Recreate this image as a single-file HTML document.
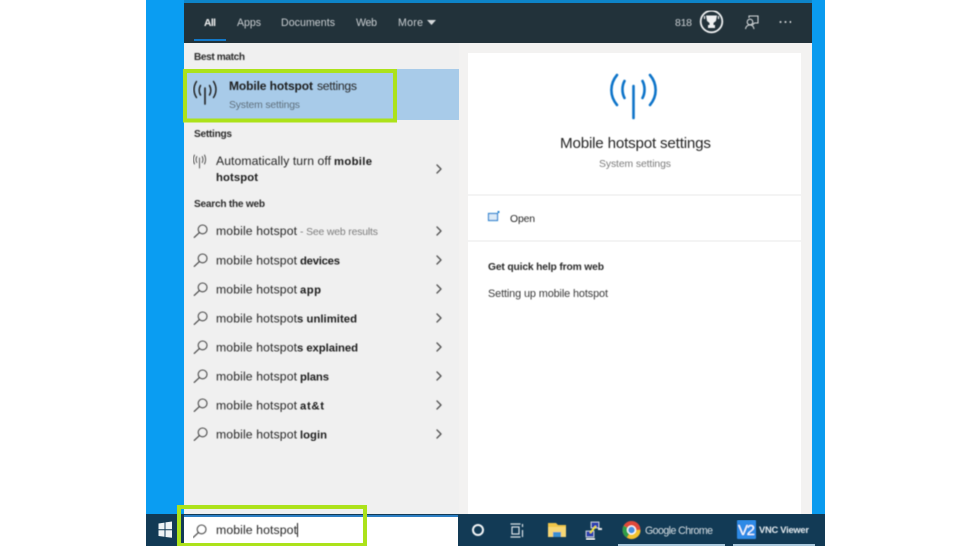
<!DOCTYPE html>
<html lang="en">
<head>
<meta charset="utf-8">
<title>Mobile hotspot search</title>
<style>
html,body{margin:0;padding:0;width:970px;height:546px;overflow:hidden;background:#fff}
svg{display:block}
text{font-family:"Liberation Sans",sans-serif;font-size:12.2px;fill:#262626}
.b{font-weight:bold;fill:#1e1e1e;font-size:11.3px}
.h{font-weight:bold;font-size:10.1px;fill:#2c2c2c}
.g{fill:#7d7d7d;font-size:10.4px}
.n{fill:#c9ced1;font-size:10.6px}
.t{fill:#d5dde2;font-size:10.2px}
.c{fill:none;stroke:#555;stroke-width:1.4;stroke-linecap:round;stroke-linejoin:round}
</style>
</head>
<body>
<svg width="970" height="546" viewBox="0 0 970 546" xmlns="http://www.w3.org/2000/svg">
<defs>
<g id="mag"><circle cx="4.6" cy="-1.6" r="4.4" fill="none" stroke="#4a4a4a" stroke-width="1.1"/><path d="M1.400 1.600L-3.800 6.400" stroke="#4a4a4a" stroke-width="1.2" stroke-linecap="round"/></g>
<path id="chev" d="M0 -4L4 0L0 4"/>
<filter id="soft" x="0" y="0" width="100%" height="100%"><feGaussianBlur stdDeviation="0.42"/></filter>
</defs>
<rect x="146" y="0" width="679" height="546" fill="#0a9df2"/>
<rect x="812" y="0" width="13" height="514" fill="#0a9bef"/>
<rect x="184" y="0" width="628" height="3" fill="#0d84c8"/>
<rect x="184" y="43" width="628" height="472" fill="#f3f2f1"/>
<rect x="184" y="43" width="275" height="472" fill="#f0f0f0"/>
<rect x="184" y="3" width="628" height="40" fill="#22323a"/>
<rect x="194" y="39" width="32" height="2" fill="#1278c8"/>
<rect x="468" y="53" width="333" height="462" fill="#fff"/>
<rect x="468" y="194" width="333" height="2" fill="#f4f4f4"/>
<rect x="468" y="240" width="333" height="2" fill="#f4f4f4"/>
<rect x="184" y="69" width="275" height="51" fill="#a8cbe9"/>

<g filter="url(#soft)">
<text x="204" y="26" class="n" style="font-weight:bold;fill:#f2f2f2;font-size:10.300px" textLength="12">All</text>
<text x="237" y="26" class="n" textLength="24">Apps</text>
<text x="281" y="26" class="n" textLength="54">Documents</text>
<text x="356" y="26" class="n" textLength="21">Web</text>
<text x="398" y="26" class="n" textLength="25">More</text>
<path d="M427 20H436L431.500 25Z" fill="#d5d9db"/>
<text x="675" y="26" class="n" style="font-size:10.500px" textLength="17">818</text>
<circle cx="711.500" cy="21.500" r="10.800" fill="none" stroke="#eef0f1" stroke-width="1.800"/>
<path d="M706 15.500H717L716 21L713.500 23V25H715V28H708V25H709.500V23L707 21Z" fill="#eef0f1"/>
<path d="M704.500 16V19M718.500 16V19" stroke="#eef0f1" stroke-width="1.200"/>
<path d="M749 18V16H758V23H754.500L752.500 25" fill="none" stroke="#d5d9db" stroke-width="1.100"/>
<circle cx="750" cy="22" r="2.800" fill="none" stroke="#d5d9db" stroke-width="1.100"/>
<path d="M745.500 29C746 26 748 25 750 25C752 25 753.500 26 754 29" fill="none" stroke="#d5d9db" stroke-width="1.100"/>
<circle cx="780.500" cy="22" r="1" fill="#d5d9db"/><circle cx="785.500" cy="22" r="1" fill="#d5d9db"/><circle cx="790.500" cy="22" r="1" fill="#d5d9db"/>

<text x="194" y="60" class="h" textLength="51">Best match</text>
<g fill="none" stroke="#222" stroke-width="1.500" stroke-linecap="round">
<path d="M205 88V104" stroke-width="1.600"/>
<path d="M200.500 85.500C198.800 88.500 198.800 92 200.500 95"/>
<path d="M209.500 85.500C211.200 88.500 211.200 92 209.500 95"/>
<path d="M196.500 81.500C193.200 86.500 193.200 92.500 196.500 97.500"/>
<path d="M213.500 81.500C216.800 86.500 216.800 92.500 213.500 97.500"/>
</g>
<text x="229" y="90" class="b" style="font-size:12px" textLength="84">Mobile hotspot</text>
<text x="317" y="90" textLength="40">settings</text>
<text x="229" y="108" class="g" textLength="71" style="fill:#5f6f7c">System settings</text>

<text x="194" y="137" class="h" textLength="38">Settings</text>
<g fill="none" stroke="#444" stroke-width="0.900" stroke-linecap="round">
<path d="M199.500 158V168"/>
<path d="M196.800 156.500C195.800 158.500 195.800 160.500 196.800 162.500"/>
<path d="M202.200 156.500C203.200 158.500 203.200 160.500 202.200 162.500"/>
<path d="M194.500 155C193 158 193 161 194.500 164"/>
<path d="M204.500 155C206 158 206 161 204.500 164"/>
</g>
<text x="216" y="165" textLength="115">Automatically turn off</text>
<text x="334" y="165" class="b" textLength="38">mobile</text>
<text x="216" y="181" class="b" textLength="42">hotspot</text>
<use href="#chev" x="437" y="169" class="c"/>

<text x="194" y="207" class="h" textLength="71">Search the web</text>

<use href="#mag" x="198" y="231"/><text x="216" y="235" textLength="81">mobile hotspot</text><text x="300" y="235" class="g" textLength="78">- See web results</text><use href="#chev" x="437" y="231" class="c"/>
<use href="#mag" x="198" y="260"/><text x="216" y="264.500" textLength="81">mobile hotspot</text><text x="300" y="264.500" class="b" textLength="40">devices</text><use href="#chev" x="437" y="260" class="c"/>
<use href="#mag" x="198" y="289"/><text x="216" y="293.500" textLength="81">mobile hotspot</text><text x="300" y="293.500" class="b" textLength="21">app</text><use href="#chev" x="437" y="289" class="c"/>
<use href="#mag" x="198" y="318"/><text x="216" y="322.500" textLength="81">mobile hotspot</text><text x="297" y="322.500" class="b" textLength="60">s unlimited</text><use href="#chev" x="437" y="318" class="c"/>
<use href="#mag" x="198" y="347"/><text x="216" y="351.500" textLength="81">mobile hotspot</text><text x="297" y="351.500" class="b" textLength="61">s explained</text><use href="#chev" x="437" y="347" class="c"/>
<use href="#mag" x="198" y="376"/><text x="216" y="380.500" textLength="81">mobile hotspot</text><text x="300" y="380.500" class="b" textLength="29">plans</text><use href="#chev" x="437" y="376" class="c"/>
<use href="#mag" x="198" y="405"/><text x="216" y="409.500" textLength="81">mobile hotspot</text><text x="300" y="409.500" class="b" textLength="24">at&amp;t</text><use href="#chev" x="437" y="405" class="c"/>
<use href="#mag" x="198" y="434"/><text x="216" y="438.500" textLength="81">mobile hotspot</text><text x="300" y="438.500" class="b" textLength="27">login</text><use href="#chev" x="437" y="434" class="c"/>

<g fill="none" stroke="#0f74c9" stroke-width="2.600" stroke-linecap="round">
<path d="M633.500 86V118"/>
<path d="M624.500 81C621.800 86 621.800 93 624.500 98"/>
<path d="M642.500 81C645.200 86 645.200 93 642.500 98"/>
<path d="M617 75C609.500 84 609.500 96 617 105"/>
<path d="M650 75C657.500 84 657.500 96 650 105"/>
</g>
<text x="560" y="148" style="font-size:15.200px" textLength="151">Mobile hotspot settings</text>
<text x="599" y="167" class="g" textLength="72">System settings</text>

<path d="M488.500 213.500H497.500V220.500H488.500Z" fill="#dcebf8" stroke="#2f86d0" stroke-width="1.200"/>
<rect x="497.500" y="211" width="2" height="2" fill="#2f86d0"/>
<text x="510" y="222" style="font-size:10.400px" textLength="25">Open</text>
<text x="488" y="270" class="h" style="font-size:10.300px" textLength="116">Get quick help from web</text>
<text x="488" y="297" style="font-size:10.900px;fill:#3a3a3a" textLength="120">Setting up mobile hotspot</text>
</g>

<rect x="146" y="514" width="679" height="32" fill="#123a55"/>
<rect x="184" y="515" width="274" height="31" fill="#fff"/>
<rect x="184" y="515" width="274" height="2" fill="#2c7fc4"/>
<rect x="180" y="517" width="4" height="29" fill="#123a55"/>

<g fill="#eef3f6">
<path d="M158.500 523.500L164.500 522.600V529.200H158.500Z"/>
<path d="M165.500 522.400L172 521.500V529.200H165.500Z"/>
<path d="M158.500 530.200H164.500V536.800L158.500 536Z"/>
<path d="M165.500 530.200H172V537.800L165.500 537Z"/>
</g>

<g filter="url(#soft)">
<use href="#mag" x="197" y="531"/>
<text x="216" y="534" style="font-size:12.300px" textLength="81">mobile hotspot</text>
<rect x="297" y="523" width="1" height="14" fill="#222"/>

<circle cx="478" cy="530" r="5" fill="none" stroke="#f2f5f7" stroke-width="2"/>
<g fill="none" stroke="#dce3e8" stroke-width="1.200">
<rect x="512" y="527" width="7" height="7"/>
<path d="M510.500 524H520.500M510.500 537H520.500"/>
<path d="M522.500 524V527M522.500 530V537"/>
</g>
<path d="M548 523H556L558 525H566V537H548Z" fill="#f0c64a"/>
<rect x="548" y="527" width="18" height="10" fill="#f7d774"/>
<rect x="553" y="532" width="8" height="5" fill="#3a8fd0"/>
<rect x="591" y="522" width="8" height="6" fill="#2a3fb0" stroke="#dfe3ea" stroke-width="0.800"/>
<rect x="586" y="531" width="8" height="6" fill="#2a3fb0" stroke="#dfe3ea" stroke-width="0.800"/>
<path d="M590 533L596 526" stroke="#f4e23a" stroke-width="2"/>
<rect x="586" y="538" width="9" height="2" fill="#e8e8e8"/>
<rect x="598" y="528" width="4" height="2" fill="#e8e8e8"/>

<circle cx="631.500" cy="530" r="9" fill="#e0493a"/>
<path d="M631.500 530L623.700 525.500A9 9 0 0 0 627 537.800Z" fill="#2f9e48"/>
<path d="M631.500 530L640.500 530A9 9 0 0 1 627 537.800Z" fill="#f3c32f"/>
<circle cx="631.500" cy="530" r="4" fill="#4a8fe0" stroke="#fff" stroke-width="1.300"/>
<text x="645" y="534" class="t" style="font-size:10.600px" textLength="68">Google Chrome</text>

<rect x="737" y="520" width="19" height="19" rx="1" fill="#2d8ae6"/>
<text x="738" y="535" style="font-size:15px;fill:#fff" textLength="17">V2</text>
<text x="759" y="533" class="t" style="fill:#e6ecf0;font-size:9.300px;font-weight:bold" textLength="50">VNC Viewer</text>
</g>
<rect x="618" y="544" width="107" height="2" fill="#a9c8dd"/>
<rect x="733" y="544" width="82" height="2" fill="#a9c8dd"/>

<rect x="185" y="71" width="210" height="49.500" fill="none" stroke="#ace21a" stroke-width="4"/>
<rect x="179" y="507" width="186" height="38" fill="none" stroke="#ace21a" stroke-width="4"/>
</svg>
</body>
</html>
